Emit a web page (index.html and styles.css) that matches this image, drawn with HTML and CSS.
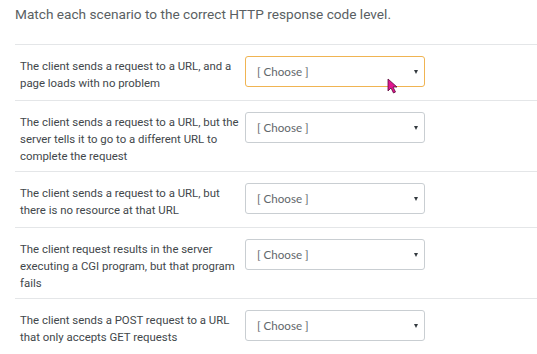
FILE: index.html
```html
<!DOCTYPE html>
<html lang="en">
<head>
    <meta charset="UTF-8">
    <meta name="viewport" content="width=device-width, initial-scale=1.0">
    <title>HTTP response codes</title>
    <link rel="stylesheet" href="styles.css">
</head>
<body>
    <div class="question">
        <p class="prompt">Match each scenario to the correct HTTP response code level.</p>

        <div class="match-row">
            <div class="scenario">The client sends a request to a URL, and a page loads with no problem</div>
            <div class="choice focused">
                <span>[ Choose ]</span>
                <i class="caret"></i>
                <svg class="cursor" width="12" height="16" viewBox="0 0 12 16">
                    <path d="M1 1 L1 13 L4 10 L6.5 15 L8.5 14 L6 9 L10 9 Z" fill="#e0158f" stroke="#5a0a3a" stroke-width="0.8"/>
                </svg>
            </div>
        </div>

        <div class="match-row">
            <div class="scenario">The client sends a request to a URL, but the server tells it to go to a different URL to complete the request</div>
            <div class="choice">
                <span>[ Choose ]</span>
                <i class="caret"></i>
            </div>
        </div>

        <div class="match-row">
            <div class="scenario">The client sends a request to a URL, but there is no resource at that URL</div>
            <div class="choice">
                <span>[ Choose ]</span>
                <i class="caret"></i>
            </div>
        </div>

        <div class="match-row">
            <div class="scenario">The client request results in the server executing a CGI program, but that program fails</div>
            <div class="choice">
                <span>[ Choose ]</span>
                <i class="caret"></i>
            </div>
        </div>

        <div class="match-row">
            <div class="scenario">The client sends a POST request to a URL that only accepts GET requests</div>
            <div class="choice">
                <span>[ Choose ]</span>
                <i class="caret"></i>
            </div>
        </div>
    </div>
</body>
</html>
```

FILE: styles.css
```css
body {
    margin: 0;
    background: white;
    font-family: Roboto, "Liberation Sans", sans-serif;
    overflow: hidden;
}
.question {
    padding: 0 0 0 15px;
}
.prompt {
    margin: 0;
    padding: 6px 0 21px;
    font-size: 13.65px;
    line-height: 17px;
    color: #5a5f63;
}
.match-row {
    display: flex;
    align-items: flex-start;
    border-top: 1px solid #e4e6e8;
    padding: 11px 0 6px 5px;
}
.scenario {
    width: 222px;
    padding-top: 2px;
    font-size: 11.4px;
    line-height: 17px;
    color: #42474b;
}
.choice {
    position: relative;
    display: flex;
    align-items: center;
    justify-content: space-between;
    box-sizing: border-box;
    width: 180px;
    height: 31px;
    margin: 0 0 7px 3px;
    padding: 0 6px 0 11px;
    border: 1px solid #c9ced2;
    border-radius: 3px;
    background: white;
    font-family: Lato, "Open Sans", sans-serif;
    font-size: 11.6px;
    color: #62676b;
}
.choice.focused {
    border-color: #f0b452;
}
.caret {
    width: 0;
    height: 0;
    border-left: 2.5px solid transparent;
    border-right: 2.5px solid transparent;
    border-top: 4px solid #333a3f;
}
.cursor {
    position: absolute;
    left: 141px;
    top: 21px;
}
```
